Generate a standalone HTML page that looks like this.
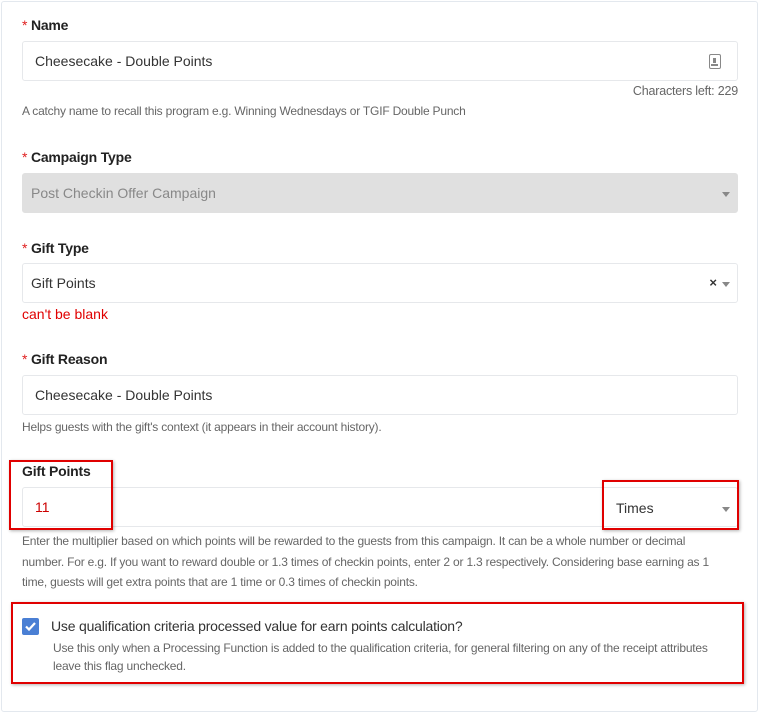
<!DOCTYPE html>
<html><head><style>
*{box-sizing:border-box;margin:0;padding:0}
body{width:760px;height:714px;background:#fff;font-family:"Liberation Sans",sans-serif;position:relative;overflow:hidden;color:#333}
.card{position:absolute;left:1px;top:1px;width:757px;height:711px;border:1px solid #e3e8ee;border-radius:3px}
.a{position:absolute;white-space:nowrap}
.lbl{font-size:14px;font-weight:bold;color:#222;letter-spacing:-0.2px}
.lbl span{color:#e02020;font-weight:normal}
.box{position:absolute;left:22px;width:716px;height:40px;border:1px solid #e6e8eb;border-radius:3px;font-size:14px;padding-left:12px;line-height:38px;color:#333}
.help{font-size:12px;color:#666;letter-spacing:-0.2px}
.arrow{position:absolute;width:0;height:0;border-left:4px solid transparent;border-right:4px solid transparent;border-top:5px solid #888}
.red{position:absolute;border:2px solid #e00000;box-shadow:1px 1px 3px rgba(0,0,0,.3)}
</style></head><body>
<div class="card"></div>
<div class="a lbl" style="left:22px;top:17px"><span>*</span> Name</div>
<div class="box" style="top:41px">Cheesecake - Double Points
<div style="position:absolute;right:16px;top:12px;width:12px;height:15px;border:1.5px solid #888;border-radius:2px"><div style="position:absolute;left:3px;top:3px;width:3px;height:5px;background:#888"></div><div style="position:absolute;left:1px;top:9px;width:7px;height:1.5px;background:#888"></div></div></div>
<div class="a help" style="right:22px;top:84px;font-size:12.5px">Characters left: 229</div>
<div class="a help" style="left:22px;top:104px">A catchy name to recall this program e.g. Winning Wednesdays or TGIF Double Punch</div>

<div class="a lbl" style="left:22px;top:149px"><span>*</span> Campaign Type</div>
<div class="box" style="top:173px;background:#e0e0e0;border-color:#e0e0e0;color:#888;padding-left:8px">Post Checkin Offer Campaign<div class="arrow" style="right:7px;top:18px"></div></div>

<div class="a lbl" style="left:22px;top:240px"><span>*</span> Gift Type</div>
<div class="box" style="top:263px;padding-left:8px">Gift Points<div class="a" style="right:20px;top:0;font-size:13px;font-weight:bold;color:#333">×</div><div class="arrow" style="right:7px;top:18px"></div></div>
<div class="a" style="left:22px;top:306px;font-size:14px;color:#e00000">can't be blank</div>

<div class="a lbl" style="left:22px;top:351px"><span>*</span> Gift Reason</div>
<div class="box" style="top:375px">Cheesecake - Double Points</div>
<div class="a help" style="left:22px;top:420px">Helps guests with the gift's context (it appears in their account history).</div>

<div class="a lbl" style="left:22px;top:463px">Gift Points</div>
<div class="box" style="top:487px;color:#c00">11</div>
<div class="a" style="left:616px;top:500px;font-size:14px;color:#333">Times</div>
<div class="arrow" style="left:722px;top:507px"></div>
<div class="red" style="left:9px;top:460px;width:104px;height:70px"></div>
<div class="red" style="left:602px;top:480px;width:137px;height:50px"></div>
<div class="a help" style="left:22px;top:531px;line-height:20.5px;white-space:normal;width:700px">Enter the multiplier based on which points will be rewarded to the guests from this campaign. It can be a whole number or decimal number. For e.g. If you want to reward double or 1.3 times of checkin points, enter 2 or 1.3 respectively. Considering base earning as 1 time, guests will get extra points that are 1 time or 0.3 times of checkin points.</div>

<div class="red" style="left:11px;top:602px;width:733px;height:82px"></div>
<div class="a" style="left:22px;top:618px;width:17px;height:17px;background:#4a7fd4;border-radius:2px">
<svg width="17" height="17" viewBox="0 0 17 17"><path d="M4 8.5l3 3 6-6.5" stroke="#fff" stroke-width="2.2" fill="none"/></svg></div>
<div class="a" style="left:51px;top:618px;font-size:14px;color:#333;letter-spacing:-0.2px">Use qualification criteria processed value for earn points calculation?</div>
<div class="a help" style="left:53px;top:639px;line-height:18px;white-space:normal;width:684px">Use this only when a Processing Function is added to the qualification criteria, for general filtering on any of the receipt attributes leave this flag unchecked.</div>
</body></html>
